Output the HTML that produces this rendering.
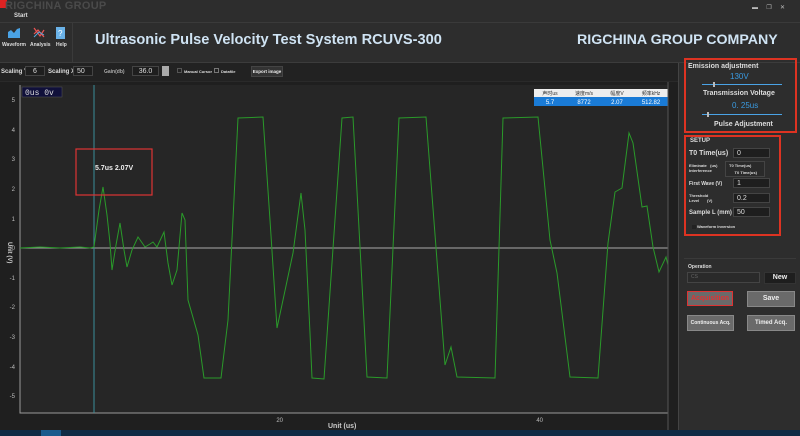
<!DOCTYPE html>
<html><head><style>
*{margin:0;padding:0;box-sizing:border-box}
body{width:800px;height:436px;background:#2a2a2a;font-family:"Liberation Sans",sans-serif;color:#ddd;position:relative;overflow:hidden}
.abs{position:absolute;white-space:nowrap}
.b{font-weight:bold}
.inp{position:absolute;background:#1e1e1e;border:1px solid #444;color:#ddd;font-size:7px;padding:1px 3px;white-space:nowrap}
.btn{position:absolute;background:#6a6a6a;border:1px solid #888;color:#eee;font-size:7px;font-weight:bold;text-align:center;white-space:nowrap}
.lab{position:absolute;font-size:6px;font-weight:bold;color:#ddd;white-space:nowrap}
</style></head><body>
<div class="abs" style="left:0;top:0;width:800px;height:62px;background:#2d2d2d"></div>
<div class="abs" style="left:0;top:0;width:7px;height:8px;background:#d22"></div>
<div class="abs b" style="left:5px;top:0;font-size:11px;color:#4a4a4a;letter-spacing:.3px">RIGCHINA GROUP</div>
<div class="abs" style="left:752px;top:4px;font-size:6px;color:#bbb">▬ &nbsp;&nbsp;&nbsp;&nbsp;❐ &nbsp;&nbsp;&nbsp;&nbsp;✕</div>
<div class="abs b" style="left:14px;top:13px;font-size:6px;color:#ddd">Start</div>
<div class="abs" style="left:0;top:22px;width:800px;height:1px;background:#3a3a3a"></div>
<div class="abs" style="left:72px;top:22px;width:1px;height:40px;background:#3a3a3a"></div>
<svg class="abs" style="left:7px;top:26px" width="60" height="14">
<path d="M1 12 L1 6 L4 4 L7 7 L10 3 L13 2 L13 12Z" fill="#4aa3e6"/>
<path d="M27 2 L33 10 L37 4 M27 8 L31 4 L37 11" stroke="#e55" stroke-width="1.2" fill="none"/>
<path d="M27 11 L32 6 L37 9" stroke="#5ad" stroke-width="1" fill="none"/>
<rect x="49" y="1" width="9" height="12" fill="#6ab2e8"/><text x="51" y="10" font-size="8" fill="#fff" font-family="Liberation Sans">?</text>
</svg>
<div class="abs b" style="left:2px;top:42px;font-size:5px">Waveform</div>
<div class="abs b" style="left:30px;top:42px;font-size:5px">Analysis</div>
<div class="abs b" style="left:56px;top:42px;font-size:5px">Help</div>
<div class="abs b" style="left:95px;top:32px;font-size:14.6px;color:#cfe3f3">Ultrasonic Pulse Velocity Test System RCUVS-300</div>
<div class="abs b" style="left:577px;top:32px;font-size:14.2px;color:#cfe3f3">RIGCHINA GROUP COMPANY</div>
<div class="abs" style="left:0;top:62px;width:800px;height:1px;background:#3c3c3c"></div>
<div class="abs" style="left:0;top:63px;width:678px;height:18px;background:#222"></div>
<div class="lab" style="left:1px;top:69px">Scaling Y</div>
<div class="inp" style="left:25px;top:66px;width:20px;height:10px;text-align:center">6</div>
<div class="lab" style="left:48px;top:69px">Scaling X</div>
<div class="inp" style="left:73px;top:66px;width:20px;height:10px">50</div>
<div class="lab" style="left:104px;top:69px;font-size:5px;color:#aaa">Gain(db)</div>
<div class="inp" style="left:132px;top:66px;width:27px;height:10px;text-align:center">36.0</div>
<div class="abs" style="left:162px;top:66px;width:7px;height:10px;background:#aaa"></div>
<div class="abs" style="left:177px;top:68px;width:5px;height:5px;border:1px solid #555"></div>
<div class="lab" style="left:184px;top:69px;font-size:4px">Manual Cursor</div>
<div class="abs" style="left:214px;top:68px;width:5px;height:5px;border:1px solid #777"></div>
<div class="lab" style="left:221px;top:69px;font-size:4px">Datafile</div>
<div class="btn" style="left:251px;top:66px;width:32px;height:11px;background:#333;border-color:#444;font-size:4.5px;line-height:9px">Export image</div>
<svg class="abs" style="left:0;top:82px" width="678" height="350">
<rect x="0" y="0" width="678" height="348" fill="#1f1f1f"/>
<rect x="20" y="3" width="648" height="328" fill="#262626"/>
<path d="M20 3 V331 H668" stroke="#999" stroke-width="1" fill="none"/>
<line x1="20" y1="166" x2="668" y2="166" stroke="#aaa" stroke-width="1"/>
<g font-size="6" fill="#bbb" font-family="Liberation Sans" text-anchor="end">
<text x="15" y="20">5</text><text x="15" y="50">4</text><text x="15" y="79">3</text><text x="15" y="109">2</text><text x="15" y="139">1</text><text x="15" y="168">0</text><text x="15" y="198">-1</text><text x="15" y="227">-2</text><text x="15" y="257">-3</text><text x="15" y="287">-4</text><text x="15" y="316">-5</text>
<text x="283" y="340">20</text><text x="543" y="340">40</text></g>
<text x="8" y="160" font-size="6" fill="#ccc" font-weight="bold" transform="rotate(90 8 160)" font-family="Liberation Sans">Unit (V)</text>
<text x="328" y="346" font-size="7" fill="#ccc" font-weight="bold" font-family="Liberation Sans">Unit (us)</text>
<line x1="94" y1="3" x2="94" y2="331" stroke="#3a8f9a" stroke-width="1"/>
<g transform="translate(0,-82)">
<polyline fill="none" stroke="#2a9a2a" stroke-width="1" points="20,248 40,247 60,248 80,247 90,248 94,247 99,210 103,187 107,215 110,243 112,270 116,245 120,223 124,250 127,267 132,250 138,237 145,247 150,244 153,242 157,247 164,232 168,263 172,285 177,270 182,213 185,220 188,300 198,335 204,378 221,378 228,320 238,118 263,117 270,220 277,328 283,300 293,253 301,193 305,230 310,333 312,378 324,379 342,118 353,117 367,377 387,378 399,118 426,117 445,365 451,347 457,377 495,378 503,118 538,117 550,240 557,273 570,377 598,378 608,243 615,192 622,188 629,133 633,143 642,207 647,206 653,247 659,272 666,257 668,265"/>
</g>
<rect x="22" y="5" width="40" height="10" fill="#10103a" stroke="#555" stroke-width=".5"/>
<text x="25" y="13" font-size="8" fill="#ddd" font-family="Liberation Mono">0us 0v</text>
<rect x="76" y="67" width="76" height="46" fill="none" stroke="#d33" stroke-width="1.2"/>
<text x="95" y="88" font-size="7" fill="#eee" font-weight="bold" font-family="Liberation Sans">5.7us 2.07V</text>
<rect x="534" y="7" width="134" height="8" fill="#eee"/>
<rect x="534" y="15" width="134" height="9" fill="#1a7bd6"/>
<g font-size="5" font-family="Liberation Sans,Noto Sans CJK SC,sans-serif" text-anchor="middle" fill="#333"><text x="550" y="13">声时us</text><text x="584" y="13">速度m/s</text><text x="617" y="13">幅度V</text><text x="651" y="13">频率kHz</text></g>
<g font-size="6" font-family="Liberation Sans" text-anchor="middle" fill="#fff"><text x="550" y="22">5.7</text><text x="584" y="22">8772</text><text x="617" y="22">2.07</text><text x="651" y="22">512.82</text></g>
<line x1="668" y1="0" x2="668" y2="348" stroke="#555"/>
</svg>
<div class="abs" style="left:678px;top:63px;width:122px;height:369px;background:#2d2d2d;border-left:1px solid #444"></div>
<div class="abs" style="left:684px;top:58px;width:113px;height:75px;border:2px solid #d32"></div>
<div class="abs b" style="left:688px;top:63px;font-size:7px">Emission adjustment</div>
<div class="abs" style="left:730px;top:72px;font-size:8px;color:#3a9ae0">130V</div>
<div class="abs" style="left:702px;top:84px;width:80px;height:1px;background:#4aa3e6"></div>
<div class="abs" style="left:713px;top:82px;width:2px;height:5px;background:#bbb"></div>
<div class="abs b" style="left:703px;top:90px;font-size:7px">Transmission Voltage</div>
<div class="abs" style="left:732px;top:101px;font-size:8px;color:#3a9ae0">0. 25us</div>
<div class="abs" style="left:702px;top:114px;width:80px;height:1px;background:#4aa3e6"></div>
<div class="abs" style="left:707px;top:112px;width:2px;height:5px;background:#bbb"></div>
<div class="abs b" style="left:714px;top:121px;font-size:7px">Pulse Adjustment</div>
<div class="abs" style="left:684px;top:135px;width:97px;height:101px;border:2px solid #d32"></div>
<div class="abs b" style="left:690px;top:138px;font-size:6px">SETUP</div>
<div class="lab" style="left:689px;top:150px;font-size:7px">T0 Time(us)</div>
<div class="inp" style="left:733px;top:148px;width:37px;height:10px">0</div>
<div class="lab" style="left:689px;top:163px;font-size:4px;line-height:5px">Eliminate &nbsp;&nbsp;(us)<br>Interference</div>
<div class="abs" style="left:725px;top:161px;width:40px;height:16px;background:#2a2a2a;border:1px solid #444;font-size:4px;font-weight:bold;line-height:7px;padding-left:3px">T0 Time(us)<br>&nbsp;&nbsp;&nbsp;&nbsp;&nbsp;T0 Time(us)</div>
<div class="lab" style="left:689px;top:181px;font-size:5px">First Wave (V)</div>
<div class="inp" style="left:733px;top:178px;width:37px;height:10px">1</div>
<div class="lab" style="left:689px;top:193px;font-size:4px;line-height:5px">Threshold<br>Level &nbsp;&nbsp;&nbsp;&nbsp;&nbsp;&nbsp;(V)</div>
<div class="inp" style="left:733px;top:193px;width:37px;height:10px">0.2</div>
<div class="lab" style="left:689px;top:210px;font-size:6px">Sample L (mm)</div>
<div class="inp" style="left:733px;top:207px;width:37px;height:10px">50</div>
<div class="abs" style="left:692px;top:225px;width:4px;height:4px;background:#222"></div>
<div class="lab" style="left:697px;top:224px;font-size:4px">Waveform Inversion</div>
<div class="abs" style="left:684px;top:258px;width:112px;height:1px;background:#3a3a3a"></div>
<div class="lab" style="left:688px;top:264px;font-size:5px">Operation</div>
<div class="inp" style="left:687px;top:272px;width:73px;height:11px;font-size:5px;color:#666;background:#2a2a2a">CS</div>
<div class="btn" style="left:764px;top:272px;width:32px;height:12px;background:#1e1e1e;border-color:#333;line-height:10px">New</div>
<div class="btn" style="left:687px;top:291px;width:46px;height:15px;color:#d33;border:1px solid #d33;line-height:13px">Acquisition</div>
<div class="btn" style="left:747px;top:291px;width:48px;height:16px;line-height:14px">Save</div>
<div class="btn" style="left:687px;top:315px;width:47px;height:16px;line-height:14px;font-size:5px">Continuous Acq.</div>
<div class="btn" style="left:747px;top:315px;width:48px;height:16px;line-height:14px;font-size:6px">Timed Acq.</div>
<div class="abs" style="left:0;top:430px;width:800px;height:6px;background:#0f2a44"></div>
<div class="abs" style="left:41px;top:430px;width:20px;height:6px;background:#1a5a8c"></div>
</body></html>
